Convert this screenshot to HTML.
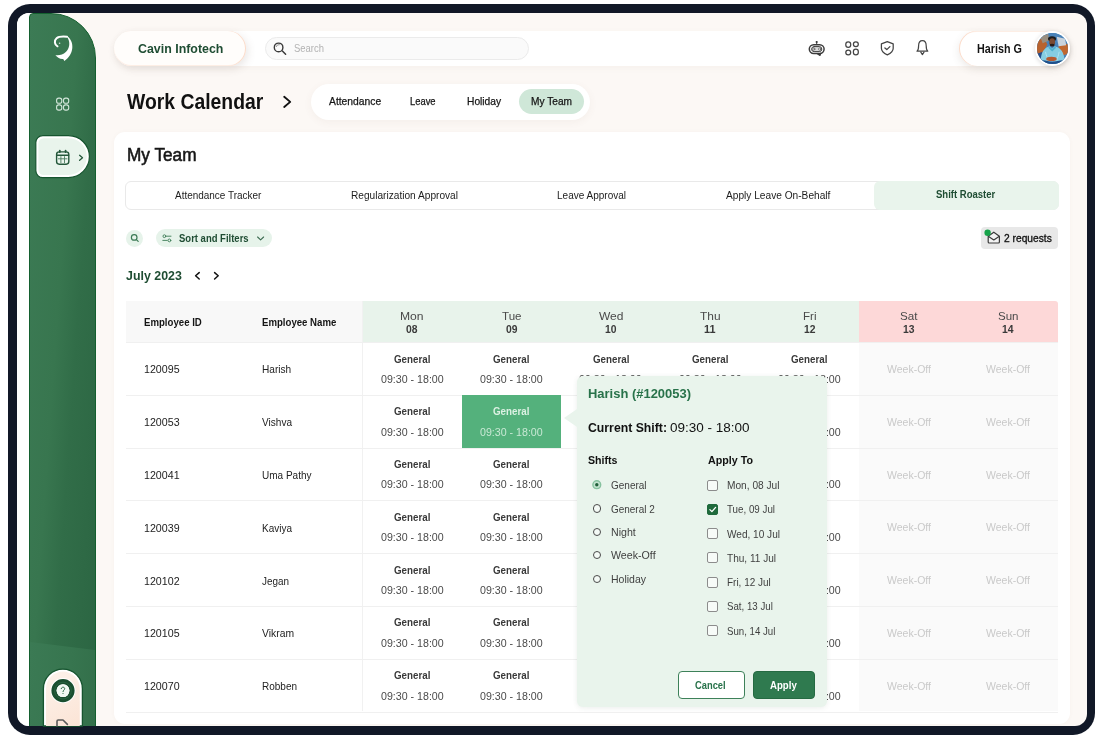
<!DOCTYPE html>
<html lang="en">
<head>
<meta charset="utf-8">
<title>Work Calendar - My Team - Shift Roaster</title>
<style>
*{box-sizing:border-box;margin:0;padding:0}
html,body{width:1098px;height:740px;overflow:hidden;background:#fff}
body{position:relative;font-family:"Liberation Sans",sans-serif}
.a{position:absolute}
.t{position:absolute;white-space:nowrap;display:inline-block;transform-origin:0 50%}
.L{left:0;top:0;width:1098px;height:740px;will-change:transform}
.t b{font-weight:700}
#frame{left:8px;top:4px;width:1087px;height:731px;border-radius:22px;background:#111827}
#screen{left:17px;top:13px;width:1070px;height:713px;border-radius:12px;background:#fcf8f5;overflow:hidden}
#gap{left:0;top:0;width:14px;height:713px;background:#fff}
#side{left:12px;top:0;width:67px;height:720px;border-radius:4px 45px 0 0;background:linear-gradient(94deg,#3c7b55 0%,#38764f 42%,#316d48 60%,#2b6542 100%);border:1px solid #14602f}
#side2{left:13px;top:629px;width:65px;height:90px;background:linear-gradient(94deg,#3b7a54 0%,#37754f 60%,#336f4a 100%);clip-path:polygon(0 0,100% 8px,100% 100%,0 100%)}
#topbar{left:114px;top:31px;width:956px;height:35px;border-radius:18px;background:#fff;box-shadow:0 2px 6px rgba(120,90,70,.05)}
#company{left:114px;top:31px;width:132px;height:35px;border-radius:18px;background:#fffdfb;box-shadow:2px 3px 8px rgba(90,70,60,.13), inset -1px 0 0 #fbdccb, inset 0 -1px 0 #fdeee5}
#search{left:265px;top:37px;width:264px;height:23px;border-radius:12px;background:#fafafa;border:1px solid #ebebeb}
#user{left:959px;top:31px;width:111px;height:35px;border-radius:18px;background:#fff;box-shadow:0 3px 8px rgba(90,70,60,.12), inset 1px 0 0 #fbdccb, inset 0 1px 0 #fdeee5}
#avatar{left:1035px;top:31px;width:35px;height:35px;border-radius:50%;border:2px solid #fff;overflow:hidden;background:#3f86b5;box-shadow:0 1px 4px rgba(0,0,0,.15)}
#tabs{left:311px;top:83.5px;width:279px;height:36px;border-radius:18px;background:#fff;box-shadow:0 2px 8px rgba(120,90,70,.06)}
#tabact{left:519px;top:89px;width:65px;height:24.5px;border-radius:13px;background:#cfe7d8}
#card{left:114px;top:131.5px;width:956px;height:592.5px;border-radius:11px;background:#fff;box-shadow:0 0 4px rgba(120,90,70,.04)}
#subtabs{left:125px;top:181px;width:933.5px;height:28.5px;border-radius:6px;border:1px solid #e9e9e9;background:#fff}
#subact{left:874px;top:181px;width:184.5px;height:28.5px;border-radius:6px;background:#e9f4ec}
#sfind{left:126px;top:229.8px;width:17.2px;height:17.2px;border-radius:50%;background:#e6f3ea}
#sort{left:155.5px;top:229.3px;width:116.5px;height:18px;border-radius:9px;background:#e6f3ea}
#req{left:980.8px;top:226.6px;width:76.8px;height:22.8px;border-radius:4px;background:#e8e8e8}
/* table */
#thl{left:126px;top:301px;width:236.5px;height:41px;background:#f8f8f8}
#thg{left:362.5px;top:301px;width:496.5px;height:41px;background:#e8f3eb}
#thp{left:859px;top:301px;width:198.6px;height:41px;background:#fdd8d8;border-radius:0 3px 0 0}
#wk{left:859px;top:342px;width:198.6px;height:369px;background:#fafafa}
.hl{left:126px;width:931.6px;height:1px;background:#f0f0f0}
#vl{left:362px;top:301px;width:1px;height:410px;background:#f1f1f1}
#selcell{left:462px;top:395px;width:99.3px;height:52.6px;background:#54b17c}
/* popover */
#pop{left:576.5px;top:376px;width:250.5px;height:331px;border-radius:6px;background:#e9f4ec;box-shadow:0 1px 5px rgba(60,90,70,.10)}
#arrow{left:563.6px;top:408.8px;width:0;height:0;border-top:9.6px solid transparent;border-bottom:9.6px solid transparent;border-right:13px solid #e9f4ec}
.rad{width:8.4px;height:8.4px;border-radius:50%;border:1.3px solid #4a4a4a;background:#f4faf6;left:592.6px}
.chk{width:11.2px;height:11.2px;border-radius:2px;border:1.1px solid #8c8c8c;background:#f7fbf8;left:707px}
#cancel{left:677.6px;top:671.2px;width:67px;height:27.6px;border-radius:4px;background:#fff;border:1.2px solid #3d8159}
#apply{left:752.8px;top:671.2px;width:62.6px;height:27.6px;border-radius:4px;background:#2f7a4f;border:1px solid #256a42}
</style>
</head>
<body>
<div class="a" id="frame"></div>
<div class="a" id="screen">
  <div class="a" id="gap"></div>
  <div class="a" id="side"></div>
  <div class="a" id="side2"></div>
</div>
<svg class="a" style="left:0;top:0" width="1098" height="740" viewBox="0 0 1098 740" fill="none">
  <!-- sidebar logo -->
  <path d="M57.5 46.3C54.5 44.9 53.9 40.6 56.6 38.3 59.1 36.2 63 36.4 67 36.8" stroke="#fff" stroke-width="2" stroke-linecap="round"/>
  <path d="M67 36C70.8 38.6 72.8 43.2 72.3 48 71.8 53.4 68.6 58 64.4 61L63.2 58.9C60 59.2 57 57.6 55.4 55 59 55.6 63 54.6 65.8 52 69.4 48.6 70.4 43 68 38.4Z" fill="#fff"/>
  <circle cx="59.6" cy="43.2" r="0.8" fill="#cfe5d6"/>
  <!-- sidebar grid -->
  <g stroke="#d3e6da" stroke-width="1.1">
    <rect x="56.6" y="98.1" width="5.2" height="5.2" rx="2.1"/>
    <rect x="63.5" y="98.1" width="5.2" height="5.2" rx="2.1"/>
    <rect x="56.6" y="104.9" width="5.2" height="5.2" rx="2.1"/>
    <rect x="63.5" y="104.9" width="5.2" height="5.2" rx="2.1"/>
  </g>
  <!-- active pill -->
  <path d="M42.8 135.6H68.4A21 21 0 0 1 68.4 177.6H42.8A7 7 0 0 1 35.8 170.6V142.6A7 7 0 0 1 42.8 135.6Z" fill="#fff" stroke="#16542f" stroke-width="1.2"/>
  <path d="M43.6 138.2H68.4A18.4 18.4 0 0 1 68.4 175H43.6A5.2 5.2 0 0 1 38.4 169.8V143.4A5.2 5.2 0 0 1 43.6 138.2Z" fill="#e9f4ec"/>
  <!-- calendar icon -->
  <g stroke="#24573a" stroke-width="1.2" stroke-linecap="round" stroke-linejoin="round">
    <rect x="56.6" y="151.9" width="12.2" height="12.3" rx="2.6" stroke-width="1.4"/>
    <path d="M56.8 155.3H68.6" stroke-width="1.4"/>
    <path d="M59.8 150.6V152M65.6 150.6V152" stroke-width="1.8"/>
    <path d="M58.4 158.8H67M60.9 156.6V162.6M64.5 156.6V162.6" stroke-width="0.9" stroke="#4a7a5e"/>
  </g>
  <path d="M79.6 155.3L82.5 157.8 79.6 160.3" stroke="#24573a" stroke-width="1.3" stroke-linecap="round" stroke-linejoin="round"/>
  <!-- bottom pill -->
  <path d="M43.4 726V688.7A19.5 19.5 0 0 1 82.4 688.7V726Z" fill="#fff" stroke="#16542f" stroke-width="1.3"/>
  <path d="M46 726V688.5A16.9 16.9 0 0 1 79.8 688.5V726Z" fill="url(#peach)"/>
  <circle cx="63" cy="690.6" r="12.6" fill="#fff"/>
  <circle cx="63" cy="690.6" r="9" stroke="#1a4f30" stroke-width="5.2"/>
  <circle cx="63" cy="690.6" r="8.4" stroke="#2f6a47" stroke-width="0.7"/>
  <circle cx="63" cy="690.6" r="6.4" fill="#f1f8f3"/>
  <path d="M61.2 688.7C61.3 686.6 64.8 686.6 64.7 688.8 64.6 690 63 690.2 63 691.6" stroke="#2c6b47" stroke-width="1" stroke-linecap="round"/>
  <circle cx="63" cy="693.5" r="0.6" fill="#2c6b47"/>
  <path d="M63 720H58.2A1.2 1.2 0 0 0 57 721.2V726M63 720L67.4 724.4" stroke="#5a5a5a" stroke-width="1.6" stroke-linecap="round"/>
  <defs>
    <linearGradient id="peach" x1="45" y1="670" x2="82" y2="730" gradientUnits="userSpaceOnUse"><stop offset="0" stop-color="#fdf3ec"/><stop offset="1" stop-color="#fbe3d4"/></linearGradient>
  </defs>
</svg>
<div class="a" id="topbar"></div>
<div class="a" id="company"></div>
<div class="a" id="search"></div>
<div class="a" id="user"></div>
<div class="a" id="avatar"><svg width="31" height="31" viewBox="0 0 33 33" style="display:block">
  <rect width="33" height="33" fill="#4a82b8"/>
  <path d="M0 8L7 5 11 12 6 22 0 24Z" fill="#b9632f"/>
  <path d="M33 12L25 10 22 17 27 24 33 22Z" fill="#c0682f"/>
  <path d="M21 4L30 6 31 13 23 14Z" fill="#c9d3dc"/>
  <path d="M3 3L12 1 13 8 6 11Z" fill="#9a8f80"/>
  <path d="M0 22L6 20 7 30 0 31Z" fill="#274f8d"/>
  <ellipse cx="16" cy="6.2" rx="4.3" ry="2.8" fill="#1c1c1c"/>
  <ellipse cx="16.1" cy="9.6" rx="3.1" ry="3.9" fill="#7b4a31"/>
  <path d="M13.2 11C14 14.6 18.2 14.6 19 11 18.6 12.4 13.8 12.4 13.2 11Z" fill="#231a15"/>
  <ellipse cx="16.2" cy="13" rx="2.4" ry="1.5" fill="#2a1d17"/>
  <path d="M4 30C4 20 8 15.5 13.4 14L16.2 16.6 19 14C25 15.5 29 20 29.5 30Z" fill="#86cde2"/>
  <path d="M13.4 14L16.2 17 19 14 20.4 15.6 16.2 19.6 12 15.6Z" fill="#4fb1d0"/>
  <path d="M9 20C10 24 11 26 12 29M23.6 20C22.8 24 22 26 21 29" stroke="#b9e6f2" stroke-width="0.9" fill="none"/>
  <ellipse cx="15.4" cy="27.6" rx="5.6" ry="2.3" fill="#b65a30"/>
  <path d="M0 33V30C8 27.6 11 30.6 16 31 22 30.6 26 27.6 33 30V33Z" fill="#1f4f8a"/>
</svg></div>
<svg class="a" style="left:0;top:0" width="1098" height="740" viewBox="0 0 1098 740" fill="none">
  <!-- search icon (topbar) -->
  <g stroke="#3a3a3a" stroke-width="1.2" stroke-linecap="round">
    <circle cx="278.6" cy="47.4" r="4.3" stroke-width="1.4"/>
    <path d="M282.4 51L285.6 54.2" stroke-width="1.5"/>
    <path d="M276.2 46.6A2.8 2.8 0 0 1 279.4 44.6" stroke-width="0.8" stroke="#777"/>
  </g>
  <!-- bot icon -->
  <g stroke="#3c3c3c" stroke-linecap="round" stroke-linejoin="round">
    <rect x="809.3" y="44.7" width="14.8" height="8.8" rx="4.4" stroke-width="1.5"/>
    <rect x="811.6" y="46.6" width="10.2" height="5" rx="2.5" stroke-width="1" fill="#d9d9d9"/>
    <circle cx="813.8" cy="49.1" r="1.1" fill="#fff" stroke-width="0.6"/>
    <circle cx="819.6" cy="49.1" r="1.1" fill="#fff" stroke-width="0.6"/>
    <path d="M816.7 43.2V44.6" stroke-width="1"/>
    <path d="M817.4 53.6L820 55.4 820.6 53.4" stroke-width="1.3" fill="#3c3c3c"/>
  </g>
  <circle cx="816.7" cy="42" r="1.1" fill="#2e2e2e"/>
  <!-- grid icon -->
  <g stroke="#444" stroke-width="1.25">
    <rect x="845.8" y="41.8" width="4.9" height="5.5" rx="2.4"/>
    <rect x="853.4" y="41.8" width="4.9" height="4.8" rx="2.4"/>
    <rect x="845.8" y="50" width="4.9" height="4.8" rx="2.4"/>
    <rect x="853.4" y="49.2" width="4.9" height="5.6" rx="2.4"/>
  </g>
  <!-- shield -->
  <g stroke="#444" stroke-width="1.25" stroke-linecap="round" stroke-linejoin="round">
    <path d="M887.3 41.6L893.2 43.8V48.2C893.2 51.4 890.6 53.4 887.3 54.8 884 53.4 881.4 51.4 881.4 48.2V43.8Z"/>
    <path d="M884.9 48L886.8 49.6 889.9 46.6" stroke-width="1.3"/>
  </g>
  <!-- bell -->
  <g stroke="#444" stroke-width="1.2" stroke-linecap="round" stroke-linejoin="round">
    <path d="M917 51.2C918.6 50 918.6 48.6 918.6 45.8 918.6 42.6 920.2 40.6 922.4 40.6 924.6 40.6 926.2 42.6 926.2 45.8 926.2 48.6 926.2 50 927.8 51.2Z"/>
    <path d="M920.8 52.2L922.4 54.6 924 52.2" />
  </g>
  <!-- title chevron -->
  <path d="M284.2 96.8L290.2 101.9 284.2 107" stroke="#111" stroke-width="1.9" stroke-linecap="round" stroke-linejoin="round"/>
</svg>
<div class="a" id="tabs"></div>
<div class="a" id="tabact"></div>
<div class="a" id="card"></div>
<div class="a" id="subtabs"></div>
<div class="a" id="subact"></div>
<div class="a" id="sfind"></div>
<div class="a" id="sort"></div>
<div class="a" id="req"></div>
<svg class="a" style="left:0;top:0" width="1098" height="740" viewBox="0 0 1098 740" fill="none">
  <!-- find icon -->
  <g stroke="#3b7a55" stroke-width="1.2" stroke-linecap="round">
    <circle cx="134.2" cy="237.4" r="2.8"/>
    <path d="M136.4 239.6L138.2 241.4"/>
  </g>
  <!-- filter icon -->
  <g stroke="#3b7a55" stroke-width="0.9" stroke-linecap="round">
    <circle cx="164.4" cy="236.2" r="1.4"/>
    <path d="M166.6 236.2H171"/>
    <circle cx="169.4" cy="240.4" r="1.4"/>
    <path d="M162.8 240.4H167.2"/>
  </g>
  <path d="M257.6 237L260.6 239.8 263.6 237" stroke="#3b6a50" stroke-width="1.1" stroke-linecap="round" stroke-linejoin="round"/>
  <!-- envelope -->
  <g stroke="#3a3a3a" stroke-width="1.2" stroke-linejoin="round" stroke-linecap="round">
    <path d="M988.2 236.2L993.8 232.2 999.4 236.2V242A1 1 0 0 1 998.4 243H989.2A1 1 0 0 1 988.2 242Z" fill="#f3f3f3"/>
    <path d="M988.6 236.6L993.8 240 999 236.6"/>
  </g>
  <circle cx="987.6" cy="232.8" r="3.2" fill="#17a34a"/>
  <!-- month chevrons -->
  <path d="M199.2 272.6L195.6 275.8 199.2 279" stroke="#111" stroke-width="1.5" stroke-linecap="round" stroke-linejoin="round"/>
  <path d="M214.6 272.6L218.2 275.8 214.6 279" stroke="#111" stroke-width="1.5" stroke-linecap="round" stroke-linejoin="round"/>
</svg>
<div class="a" id="thl"></div>
<div class="a" id="thg"></div>
<div class="a" id="thp"></div>
<div class="a" id="wk"></div>
<div class="a" id="vl"></div>
<div class="a hl" style="top:342px"></div>
<div class="a hl" style="top:394.8px"></div>
<div class="a hl" style="top:447.6px"></div>
<div class="a hl" style="top:500.3px"></div>
<div class="a hl" style="top:553.1px"></div>
<div class="a hl" style="top:605.9px"></div>
<div class="a hl" style="top:658.7px"></div>
<div class="a hl" style="top:711.5px"></div>
<div class="a" id="selcell"></div>
<div class="a L">
<span class="t" style="left:143.7px;top:363.3px;font-size:10.5px;line-height:13.7px;font-weight:400;color:#222;transform:scaleX(1.0158);">120095</span>
<span class="t" style="left:262.0px;top:363.3px;font-size:10.5px;line-height:13.7px;font-weight:400;color:#222;transform:scaleX(0.9623);">Harish</span>
<span class="t" style="left:393.9px;top:352.5px;font-size:10px;line-height:13.0px;font-weight:700;color:#3a3a3a;transform:scaleX(0.9772);">General</span>
<span class="t" style="left:380.8px;top:372.8px;font-size:10px;line-height:13.0px;font-weight:400;color:#4a4a4a;transform:scaleX(1.0638);">09:30 - 18:00</span>
<span class="t" style="left:493.2px;top:352.5px;font-size:10px;line-height:13.0px;font-weight:700;color:#3a3a3a;transform:scaleX(0.9772);">General</span>
<span class="t" style="left:480.1px;top:372.8px;font-size:10px;line-height:13.0px;font-weight:400;color:#4a4a4a;transform:scaleX(1.0638);">09:30 - 18:00</span>
<span class="t" style="left:592.5px;top:352.5px;font-size:10px;line-height:13.0px;font-weight:700;color:#3a3a3a;transform:scaleX(0.9772);">General</span>
<span class="t" style="left:579.4px;top:372.8px;font-size:10px;line-height:13.0px;font-weight:400;color:#4a4a4a;transform:scaleX(1.0638);">09:30 - 18:00</span>
<span class="t" style="left:691.8px;top:352.5px;font-size:10px;line-height:13.0px;font-weight:700;color:#3a3a3a;transform:scaleX(0.9772);">General</span>
<span class="t" style="left:678.7px;top:372.8px;font-size:10px;line-height:13.0px;font-weight:400;color:#4a4a4a;transform:scaleX(1.0638);">09:30 - 18:00</span>
<span class="t" style="left:791.1px;top:352.5px;font-size:10px;line-height:13.0px;font-weight:700;color:#3a3a3a;transform:scaleX(0.9772);">General</span>
<span class="t" style="left:778.0px;top:372.8px;font-size:10px;line-height:13.0px;font-weight:400;color:#4a4a4a;transform:scaleX(1.0638);">09:30 - 18:00</span>
<span class="t" style="left:886.6px;top:362.9px;font-size:10.5px;line-height:13.7px;font-weight:400;color:#c9c9c9;transform:scaleX(1.0007);">Week-Off</span>
<span class="t" style="left:985.9px;top:362.9px;font-size:10.5px;line-height:13.7px;font-weight:400;color:#c9c9c9;transform:scaleX(1.0007);">Week-Off</span>
<span class="t" style="left:143.7px;top:416.1px;font-size:10.5px;line-height:13.7px;font-weight:400;color:#222;transform:scaleX(1.0158);">120053</span>
<span class="t" style="left:262.0px;top:416.1px;font-size:10.5px;line-height:13.7px;font-weight:400;color:#222;transform:scaleX(0.9576);">Vishva</span>
<span class="t" style="left:393.9px;top:405.3px;font-size:10px;line-height:13.0px;font-weight:700;color:#3a3a3a;transform:scaleX(0.9772);">General</span>
<span class="t" style="left:380.8px;top:425.6px;font-size:10px;line-height:13.0px;font-weight:400;color:#4a4a4a;transform:scaleX(1.0638);">09:30 - 18:00</span>
<span class="t" style="left:493.2px;top:405.3px;font-size:10px;line-height:13.0px;font-weight:700;color:#dcf1e3;transform:scaleX(0.9772);">General</span>
<span class="t" style="left:480.1px;top:425.6px;font-size:10px;line-height:13.0px;font-weight:400;color:#c8e8d4;transform:scaleX(1.0638);">09:30 - 18:00</span>
<span class="t" style="left:592.5px;top:405.3px;font-size:10px;line-height:13.0px;font-weight:700;color:#3a3a3a;transform:scaleX(0.9772);">General</span>
<span class="t" style="left:579.4px;top:425.6px;font-size:10px;line-height:13.0px;font-weight:400;color:#4a4a4a;transform:scaleX(1.0638);">09:30 - 18:00</span>
<span class="t" style="left:691.8px;top:405.3px;font-size:10px;line-height:13.0px;font-weight:700;color:#3a3a3a;transform:scaleX(0.9772);">General</span>
<span class="t" style="left:678.7px;top:425.6px;font-size:10px;line-height:13.0px;font-weight:400;color:#4a4a4a;transform:scaleX(1.0638);">09:30 - 18:00</span>
<span class="t" style="left:791.1px;top:405.3px;font-size:10px;line-height:13.0px;font-weight:700;color:#3a3a3a;transform:scaleX(0.9772);">General</span>
<span class="t" style="left:778.0px;top:425.6px;font-size:10px;line-height:13.0px;font-weight:400;color:#4a4a4a;transform:scaleX(1.0638);">09:30 - 18:00</span>
<span class="t" style="left:886.6px;top:415.7px;font-size:10.5px;line-height:13.7px;font-weight:400;color:#c9c9c9;transform:scaleX(1.0007);">Week-Off</span>
<span class="t" style="left:985.9px;top:415.7px;font-size:10.5px;line-height:13.7px;font-weight:400;color:#c9c9c9;transform:scaleX(1.0007);">Week-Off</span>
<span class="t" style="left:143.7px;top:468.9px;font-size:10.5px;line-height:13.7px;font-weight:400;color:#222;transform:scaleX(1.0158);">120041</span>
<span class="t" style="left:262.0px;top:468.9px;font-size:10.5px;line-height:13.7px;font-weight:400;color:#222;transform:scaleX(0.9531);">Uma Pathy</span>
<span class="t" style="left:393.9px;top:458.1px;font-size:10px;line-height:13.0px;font-weight:700;color:#3a3a3a;transform:scaleX(0.9772);">General</span>
<span class="t" style="left:380.8px;top:478.4px;font-size:10px;line-height:13.0px;font-weight:400;color:#4a4a4a;transform:scaleX(1.0638);">09:30 - 18:00</span>
<span class="t" style="left:493.2px;top:458.1px;font-size:10px;line-height:13.0px;font-weight:700;color:#3a3a3a;transform:scaleX(0.9772);">General</span>
<span class="t" style="left:480.1px;top:478.4px;font-size:10px;line-height:13.0px;font-weight:400;color:#4a4a4a;transform:scaleX(1.0638);">09:30 - 18:00</span>
<span class="t" style="left:592.5px;top:458.1px;font-size:10px;line-height:13.0px;font-weight:700;color:#3a3a3a;transform:scaleX(0.9772);">General</span>
<span class="t" style="left:579.4px;top:478.4px;font-size:10px;line-height:13.0px;font-weight:400;color:#4a4a4a;transform:scaleX(1.0638);">09:30 - 18:00</span>
<span class="t" style="left:691.8px;top:458.1px;font-size:10px;line-height:13.0px;font-weight:700;color:#3a3a3a;transform:scaleX(0.9772);">General</span>
<span class="t" style="left:678.7px;top:478.4px;font-size:10px;line-height:13.0px;font-weight:400;color:#4a4a4a;transform:scaleX(1.0638);">09:30 - 18:00</span>
<span class="t" style="left:791.1px;top:458.1px;font-size:10px;line-height:13.0px;font-weight:700;color:#3a3a3a;transform:scaleX(0.9772);">General</span>
<span class="t" style="left:778.0px;top:478.4px;font-size:10px;line-height:13.0px;font-weight:400;color:#4a4a4a;transform:scaleX(1.0638);">09:30 - 18:00</span>
<span class="t" style="left:886.6px;top:468.5px;font-size:10.5px;line-height:13.7px;font-weight:400;color:#c9c9c9;transform:scaleX(1.0007);">Week-Off</span>
<span class="t" style="left:985.9px;top:468.5px;font-size:10.5px;line-height:13.7px;font-weight:400;color:#c9c9c9;transform:scaleX(1.0007);">Week-Off</span>
<span class="t" style="left:143.7px;top:521.7px;font-size:10.5px;line-height:13.7px;font-weight:400;color:#222;transform:scaleX(1.0158);">120039</span>
<span class="t" style="left:262.0px;top:521.7px;font-size:10.5px;line-height:13.7px;font-weight:400;color:#222;transform:scaleX(0.9519);">Kaviya</span>
<span class="t" style="left:393.9px;top:510.8px;font-size:10px;line-height:13.0px;font-weight:700;color:#3a3a3a;transform:scaleX(0.9772);">General</span>
<span class="t" style="left:380.8px;top:531.1px;font-size:10px;line-height:13.0px;font-weight:400;color:#4a4a4a;transform:scaleX(1.0638);">09:30 - 18:00</span>
<span class="t" style="left:493.2px;top:510.8px;font-size:10px;line-height:13.0px;font-weight:700;color:#3a3a3a;transform:scaleX(0.9772);">General</span>
<span class="t" style="left:480.1px;top:531.1px;font-size:10px;line-height:13.0px;font-weight:400;color:#4a4a4a;transform:scaleX(1.0638);">09:30 - 18:00</span>
<span class="t" style="left:592.5px;top:510.8px;font-size:10px;line-height:13.0px;font-weight:700;color:#3a3a3a;transform:scaleX(0.9772);">General</span>
<span class="t" style="left:579.4px;top:531.1px;font-size:10px;line-height:13.0px;font-weight:400;color:#4a4a4a;transform:scaleX(1.0638);">09:30 - 18:00</span>
<span class="t" style="left:691.8px;top:510.8px;font-size:10px;line-height:13.0px;font-weight:700;color:#3a3a3a;transform:scaleX(0.9772);">General</span>
<span class="t" style="left:678.7px;top:531.1px;font-size:10px;line-height:13.0px;font-weight:400;color:#4a4a4a;transform:scaleX(1.0638);">09:30 - 18:00</span>
<span class="t" style="left:791.1px;top:510.8px;font-size:10px;line-height:13.0px;font-weight:700;color:#3a3a3a;transform:scaleX(0.9772);">General</span>
<span class="t" style="left:778.0px;top:531.1px;font-size:10px;line-height:13.0px;font-weight:400;color:#4a4a4a;transform:scaleX(1.0638);">09:30 - 18:00</span>
<span class="t" style="left:886.6px;top:521.3px;font-size:10.5px;line-height:13.7px;font-weight:400;color:#c9c9c9;transform:scaleX(1.0007);">Week-Off</span>
<span class="t" style="left:985.9px;top:521.3px;font-size:10.5px;line-height:13.7px;font-weight:400;color:#c9c9c9;transform:scaleX(1.0007);">Week-Off</span>
<span class="t" style="left:143.7px;top:574.5px;font-size:10.5px;line-height:13.7px;font-weight:400;color:#222;transform:scaleX(1.0158);">120102</span>
<span class="t" style="left:262.0px;top:574.5px;font-size:10.5px;line-height:13.7px;font-weight:400;color:#222;transform:scaleX(0.9437);">Jegan</span>
<span class="t" style="left:393.9px;top:563.6px;font-size:10px;line-height:13.0px;font-weight:700;color:#3a3a3a;transform:scaleX(0.9772);">General</span>
<span class="t" style="left:380.8px;top:583.9px;font-size:10px;line-height:13.0px;font-weight:400;color:#4a4a4a;transform:scaleX(1.0638);">09:30 - 18:00</span>
<span class="t" style="left:493.2px;top:563.6px;font-size:10px;line-height:13.0px;font-weight:700;color:#3a3a3a;transform:scaleX(0.9772);">General</span>
<span class="t" style="left:480.1px;top:583.9px;font-size:10px;line-height:13.0px;font-weight:400;color:#4a4a4a;transform:scaleX(1.0638);">09:30 - 18:00</span>
<span class="t" style="left:592.5px;top:563.6px;font-size:10px;line-height:13.0px;font-weight:700;color:#3a3a3a;transform:scaleX(0.9772);">General</span>
<span class="t" style="left:579.4px;top:583.9px;font-size:10px;line-height:13.0px;font-weight:400;color:#4a4a4a;transform:scaleX(1.0638);">09:30 - 18:00</span>
<span class="t" style="left:691.8px;top:563.6px;font-size:10px;line-height:13.0px;font-weight:700;color:#3a3a3a;transform:scaleX(0.9772);">General</span>
<span class="t" style="left:678.7px;top:583.9px;font-size:10px;line-height:13.0px;font-weight:400;color:#4a4a4a;transform:scaleX(1.0638);">09:30 - 18:00</span>
<span class="t" style="left:791.1px;top:563.6px;font-size:10px;line-height:13.0px;font-weight:700;color:#3a3a3a;transform:scaleX(0.9772);">General</span>
<span class="t" style="left:778.0px;top:583.9px;font-size:10px;line-height:13.0px;font-weight:400;color:#4a4a4a;transform:scaleX(1.0638);">09:30 - 18:00</span>
<span class="t" style="left:886.6px;top:574.1px;font-size:10.5px;line-height:13.7px;font-weight:400;color:#c9c9c9;transform:scaleX(1.0007);">Week-Off</span>
<span class="t" style="left:985.9px;top:574.1px;font-size:10.5px;line-height:13.7px;font-weight:400;color:#c9c9c9;transform:scaleX(1.0007);">Week-Off</span>
<span class="t" style="left:143.7px;top:627.2px;font-size:10.5px;line-height:13.7px;font-weight:400;color:#222;transform:scaleX(1.0158);">120105</span>
<span class="t" style="left:262.0px;top:627.2px;font-size:10.5px;line-height:13.7px;font-weight:400;color:#222;transform:scaleX(0.9851);">Vikram</span>
<span class="t" style="left:393.9px;top:616.4px;font-size:10px;line-height:13.0px;font-weight:700;color:#3a3a3a;transform:scaleX(0.9772);">General</span>
<span class="t" style="left:380.8px;top:636.7px;font-size:10px;line-height:13.0px;font-weight:400;color:#4a4a4a;transform:scaleX(1.0638);">09:30 - 18:00</span>
<span class="t" style="left:493.2px;top:616.4px;font-size:10px;line-height:13.0px;font-weight:700;color:#3a3a3a;transform:scaleX(0.9772);">General</span>
<span class="t" style="left:480.1px;top:636.7px;font-size:10px;line-height:13.0px;font-weight:400;color:#4a4a4a;transform:scaleX(1.0638);">09:30 - 18:00</span>
<span class="t" style="left:592.5px;top:616.4px;font-size:10px;line-height:13.0px;font-weight:700;color:#3a3a3a;transform:scaleX(0.9772);">General</span>
<span class="t" style="left:579.4px;top:636.7px;font-size:10px;line-height:13.0px;font-weight:400;color:#4a4a4a;transform:scaleX(1.0638);">09:30 - 18:00</span>
<span class="t" style="left:691.8px;top:616.4px;font-size:10px;line-height:13.0px;font-weight:700;color:#3a3a3a;transform:scaleX(0.9772);">General</span>
<span class="t" style="left:678.7px;top:636.7px;font-size:10px;line-height:13.0px;font-weight:400;color:#4a4a4a;transform:scaleX(1.0638);">09:30 - 18:00</span>
<span class="t" style="left:791.1px;top:616.4px;font-size:10px;line-height:13.0px;font-weight:700;color:#3a3a3a;transform:scaleX(0.9772);">General</span>
<span class="t" style="left:778.0px;top:636.7px;font-size:10px;line-height:13.0px;font-weight:400;color:#4a4a4a;transform:scaleX(1.0638);">09:30 - 18:00</span>
<span class="t" style="left:886.6px;top:626.8px;font-size:10.5px;line-height:13.7px;font-weight:400;color:#c9c9c9;transform:scaleX(1.0007);">Week-Off</span>
<span class="t" style="left:985.9px;top:626.8px;font-size:10.5px;line-height:13.7px;font-weight:400;color:#c9c9c9;transform:scaleX(1.0007);">Week-Off</span>
<span class="t" style="left:143.7px;top:680.0px;font-size:10.5px;line-height:13.7px;font-weight:400;color:#222;transform:scaleX(1.0158);">120070</span>
<span class="t" style="left:262.0px;top:680.0px;font-size:10.5px;line-height:13.7px;font-weight:400;color:#222;transform:scaleX(0.9516);">Robben</span>
<span class="t" style="left:393.9px;top:669.2px;font-size:10px;line-height:13.0px;font-weight:700;color:#3a3a3a;transform:scaleX(0.9772);">General</span>
<span class="t" style="left:380.8px;top:689.5px;font-size:10px;line-height:13.0px;font-weight:400;color:#4a4a4a;transform:scaleX(1.0638);">09:30 - 18:00</span>
<span class="t" style="left:493.2px;top:669.2px;font-size:10px;line-height:13.0px;font-weight:700;color:#3a3a3a;transform:scaleX(0.9772);">General</span>
<span class="t" style="left:480.1px;top:689.5px;font-size:10px;line-height:13.0px;font-weight:400;color:#4a4a4a;transform:scaleX(1.0638);">09:30 - 18:00</span>
<span class="t" style="left:592.5px;top:669.2px;font-size:10px;line-height:13.0px;font-weight:700;color:#3a3a3a;transform:scaleX(0.9772);">General</span>
<span class="t" style="left:579.4px;top:689.5px;font-size:10px;line-height:13.0px;font-weight:400;color:#4a4a4a;transform:scaleX(1.0638);">09:30 - 18:00</span>
<span class="t" style="left:691.8px;top:669.2px;font-size:10px;line-height:13.0px;font-weight:700;color:#3a3a3a;transform:scaleX(0.9772);">General</span>
<span class="t" style="left:678.7px;top:689.5px;font-size:10px;line-height:13.0px;font-weight:400;color:#4a4a4a;transform:scaleX(1.0638);">09:30 - 18:00</span>
<span class="t" style="left:791.1px;top:669.2px;font-size:10px;line-height:13.0px;font-weight:700;color:#3a3a3a;transform:scaleX(0.9772);">General</span>
<span class="t" style="left:778.0px;top:689.5px;font-size:10px;line-height:13.0px;font-weight:400;color:#4a4a4a;transform:scaleX(1.0638);">09:30 - 18:00</span>
<span class="t" style="left:886.6px;top:679.6px;font-size:10.5px;line-height:13.7px;font-weight:400;color:#c9c9c9;transform:scaleX(1.0007);">Week-Off</span>
<span class="t" style="left:985.9px;top:679.6px;font-size:10.5px;line-height:13.7px;font-weight:400;color:#c9c9c9;transform:scaleX(1.0007);">Week-Off</span>
</div>
<div class="a" id="pop"></div>
<div class="a" id="arrow"></div>
<div class="a rad" style="top:480.5px"></div>
<div class="a rad" style="top:504.4px"></div>
<div class="a rad" style="top:527.8px"></div>
<div class="a rad" style="top:551px"></div>
<div class="a rad" style="top:574.6px"></div>
<div class="a chk" style="top:479.6px"></div>
<div class="a chk" style="top:503.8px;background:#1f6a3c;border-color:#1f6a3c"></div>
<div class="a chk" style="top:528.3px"></div>
<div class="a chk" style="top:552.3px"></div>
<div class="a chk" style="top:576.6px"></div>
<div class="a chk" style="top:600.8px"></div>
<div class="a chk" style="top:624.9px"></div>
<div class="a" id="cancel"></div>
<div class="a" id="apply"></div>
<svg class="a" style="left:0;top:0" width="1098" height="740" viewBox="0 0 1098 740" fill="none">
  <circle cx="596.8" cy="484.7" r="3.9" stroke="#86c29f" stroke-width="1.4" fill="#c3e2cf"/>
  <circle cx="596.8" cy="484.7" r="1.7" fill="#1f5e39"/>
  <path d="M709.9 509.6L711.9 511.6 715.6 507.4" stroke="#fff" stroke-width="1.3" stroke-linecap="round" stroke-linejoin="round"/>
</svg>
<div class="a L">
<span class="t" style="left:137.6px;top:40.1px;font-size:13.5px;line-height:17.6px;font-weight:700;color:#1f4d33;transform:scaleX(0.9181);">Cavin Infotech</span>
<span class="t" style="left:294.0px;top:42.1px;font-size:10px;line-height:13.0px;font-weight:400;color:#b3b3b3;transform:scaleX(0.9467);">Search</span>
<span class="t" style="left:977.0px;top:40.8px;font-size:12.5px;line-height:16.2px;font-weight:700;color:#151515;transform:scaleX(0.8597);">Harish G</span>
<span class="t" style="left:126.7px;top:89.1px;font-size:21.5px;line-height:27.9px;font-weight:700;color:#111;transform:scaleX(0.9006);">Work Calendar</span>
<span class="t" style="left:328.7px;top:94.8px;font-size:10.5px;line-height:13.7px;font-weight:400;color:#151515;transform:scaleX(0.9823);-webkit-text-stroke:0.25px #151515;">Attendance</span>
<span class="t" style="left:410.4px;top:94.8px;font-size:10.5px;line-height:13.7px;font-weight:400;color:#151515;transform:scaleX(0.8948);-webkit-text-stroke:0.25px #151515;">Leave</span>
<span class="t" style="left:466.7px;top:94.8px;font-size:10.5px;line-height:13.7px;font-weight:400;color:#151515;transform:scaleX(0.9734);-webkit-text-stroke:0.25px #151515;">Holiday</span>
<span class="t" style="left:530.9px;top:94.8px;font-size:10.5px;line-height:13.7px;font-weight:400;color:#151515;transform:scaleX(0.9668);-webkit-text-stroke:0.25px #151515;">My Team</span>
<span class="t" style="left:126.5px;top:143.5px;font-size:17.5px;line-height:22.8px;font-weight:400;color:#161616;transform:scaleX(0.9834);-webkit-text-stroke:0.55px #161616;">My Team</span>
<span class="t" style="left:175.2px;top:188.8px;font-size:10px;line-height:13.0px;font-weight:400;color:#1c1c1c;transform:scaleX(0.9952);">Attendance Tracker</span>
<span class="t" style="left:351.4px;top:188.8px;font-size:10px;line-height:13.0px;font-weight:400;color:#1c1c1c;transform:scaleX(1.0130);">Regularization Approval</span>
<span class="t" style="left:557.0px;top:188.8px;font-size:10px;line-height:13.0px;font-weight:400;color:#1c1c1c;transform:scaleX(1.0007);">Leave Approval</span>
<span class="t" style="left:725.9px;top:188.8px;font-size:10px;line-height:13.0px;font-weight:400;color:#1c1c1c;transform:scaleX(1.0151);">Apply Leave On-Behalf</span>
<span class="t" style="left:936.2px;top:188.2px;font-size:10.5px;line-height:13.7px;font-weight:700;color:#1f4d33;transform:scaleX(0.9075);">Shift Roaster</span>
<span class="t" style="left:178.8px;top:231.5px;font-size:10.5px;line-height:13.7px;font-weight:700;color:#1f4d33;transform:scaleX(0.9037);">Sort and Filters</span>
<span class="t" style="left:1003.8px;top:231.8px;font-size:10.5px;line-height:13.7px;font-weight:400;color:#111;transform:scaleX(0.9749);-webkit-text-stroke:0.3px #111;">2 requests</span>
<span class="t" style="left:126.2px;top:267.6px;font-size:13px;line-height:16.9px;font-weight:700;color:#1f4d33;transform:scaleX(0.9531);">July 2023</span>
<span class="t" style="left:143.7px;top:315.6px;font-size:10.5px;line-height:13.7px;font-weight:700;color:#151515;transform:scaleX(0.9170);">Employee ID</span>
<span class="t" style="left:262.0px;top:315.6px;font-size:10.5px;line-height:13.7px;font-weight:700;color:#151515;transform:scaleX(0.9159);">Employee Name</span>
<span class="t" style="left:400.3px;top:308.8px;font-size:11.5px;line-height:15.0px;font-weight:400;color:#4a4a4a;transform:scaleX(1.0547);">Mon</span>
<span class="t" style="left:406.4px;top:322.9px;font-size:10px;line-height:13.0px;font-weight:700;color:#3a3a3a;transform:scaleX(1.0337);">08</span>
<span class="t" style="left:501.7px;top:308.8px;font-size:11.5px;line-height:15.0px;font-weight:400;color:#4a4a4a;transform:scaleX(1.0056);">Tue</span>
<span class="t" style="left:505.7px;top:322.9px;font-size:10px;line-height:13.0px;font-weight:700;color:#3a3a3a;transform:scaleX(1.0337);">09</span>
<span class="t" style="left:598.5px;top:308.8px;font-size:11.5px;line-height:15.0px;font-weight:400;color:#4a4a4a;transform:scaleX(1.0446);">Wed</span>
<span class="t" style="left:605.0px;top:322.9px;font-size:10px;line-height:13.0px;font-weight:700;color:#3a3a3a;transform:scaleX(1.0337);">10</span>
<span class="t" style="left:699.8px;top:308.8px;font-size:11.5px;line-height:15.0px;font-weight:400;color:#4a4a4a;transform:scaleX(1.0339);">Thu</span>
<span class="t" style="left:704.3px;top:322.9px;font-size:10px;line-height:13.0px;font-weight:700;color:#3a3a3a;transform:scaleX(1.0871);">11</span>
<span class="t" style="left:802.6px;top:308.8px;font-size:11.5px;line-height:15.0px;font-weight:400;color:#4a4a4a;transform:scaleX(1.0058);">Fri</span>
<span class="t" style="left:803.6px;top:322.9px;font-size:10px;line-height:13.0px;font-weight:700;color:#3a3a3a;transform:scaleX(1.0337);">12</span>
<span class="t" style="left:899.9px;top:308.8px;font-size:11.5px;line-height:15.0px;font-weight:400;color:#4a4a4a;transform:scaleX(1.0136);">Sat</span>
<span class="t" style="left:902.9px;top:322.9px;font-size:10px;line-height:13.0px;font-weight:700;color:#3a3a3a;transform:scaleX(1.0337);">13</span>
<span class="t" style="left:997.7px;top:308.8px;font-size:11.5px;line-height:15.0px;font-weight:400;color:#4a4a4a;transform:scaleX(1.0015);">Sun</span>
<span class="t" style="left:1002.2px;top:322.9px;font-size:10px;line-height:13.0px;font-weight:700;color:#3a3a3a;transform:scaleX(1.0337);">14</span>
<span class="t" style="left:588.0px;top:384.7px;font-size:13.5px;line-height:17.6px;font-weight:700;color:#28724a;transform:scaleX(0.9597);">Harish (#120053)</span>
<span class="t" style="left:588.0px;top:418.8px;font-size:13.5px;line-height:17.6px;font-weight:700;color:#111;transform:scaleX(0.9080);">Current Shift:</span>
<span class="t" style="left:670.3px;top:418.8px;font-size:13.5px;line-height:17.6px;font-weight:400;color:#111;transform:scaleX(1.0003);">09:30 - 18:00</span>
<span class="t" style="left:588.0px;top:452.5px;font-size:11.5px;line-height:15.0px;font-weight:700;color:#111;transform:scaleX(0.9232);">Shifts</span>
<span class="t" style="left:707.6px;top:452.5px;font-size:11.5px;line-height:15.0px;font-weight:700;color:#111;transform:scaleX(0.9308);">Apply To</span>
<span class="t" style="left:611.4px;top:477.6px;font-size:11px;line-height:14.3px;font-weight:400;color:#3f3f3f;transform:scaleX(0.9095);">General</span>
<span class="t" style="left:611.4px;top:501.5px;font-size:11px;line-height:14.3px;font-weight:400;color:#3f3f3f;transform:scaleX(0.9045);">General 2</span>
<span class="t" style="left:611.4px;top:524.9px;font-size:11px;line-height:14.3px;font-weight:400;color:#3f3f3f;transform:scaleX(0.9655);">Night</span>
<span class="t" style="left:611.4px;top:548.1px;font-size:11px;line-height:14.3px;font-weight:400;color:#3f3f3f;transform:scaleX(0.9682);">Week-Off</span>
<span class="t" style="left:611.4px;top:571.6px;font-size:11px;line-height:14.3px;font-weight:400;color:#3f3f3f;transform:scaleX(0.9540);">Holiday</span>
<span class="t" style="left:726.5px;top:478.2px;font-size:11px;line-height:14.3px;font-weight:400;color:#3f3f3f;transform:scaleX(0.9231);">Mon, 08 Jul</span>
<span class="t" style="left:726.5px;top:502.4px;font-size:11px;line-height:14.3px;font-weight:400;color:#3f3f3f;transform:scaleX(0.8886);">Tue, 09 Jul</span>
<span class="t" style="left:726.5px;top:526.9px;font-size:11px;line-height:14.3px;font-weight:400;color:#3f3f3f;transform:scaleX(0.9155);">Wed, 10 Jul</span>
<span class="t" style="left:726.5px;top:550.9px;font-size:11px;line-height:14.3px;font-weight:400;color:#3f3f3f;transform:scaleX(0.9140);">Thu, 11 Jul</span>
<span class="t" style="left:726.5px;top:575.1px;font-size:11px;line-height:14.3px;font-weight:400;color:#3f3f3f;transform:scaleX(0.9048);">Fri, 12 Jul</span>
<span class="t" style="left:726.5px;top:599.4px;font-size:11px;line-height:14.3px;font-weight:400;color:#3f3f3f;transform:scaleX(0.8810);">Sat, 13 Jul</span>
<span class="t" style="left:726.5px;top:623.5px;font-size:11px;line-height:14.3px;font-weight:400;color:#3f3f3f;transform:scaleX(0.8793);">Sun, 14 Jul</span>
<span class="t" style="left:695.3px;top:677.8px;font-size:11px;line-height:14.3px;font-weight:700;color:#28724a;transform:scaleX(0.8482);">Cancel</span>
<span class="t" style="left:770.3px;top:677.8px;font-size:11px;line-height:14.3px;font-weight:700;color:#fff;transform:scaleX(0.8769);">Apply</span>
</div>
</body>
</html>
